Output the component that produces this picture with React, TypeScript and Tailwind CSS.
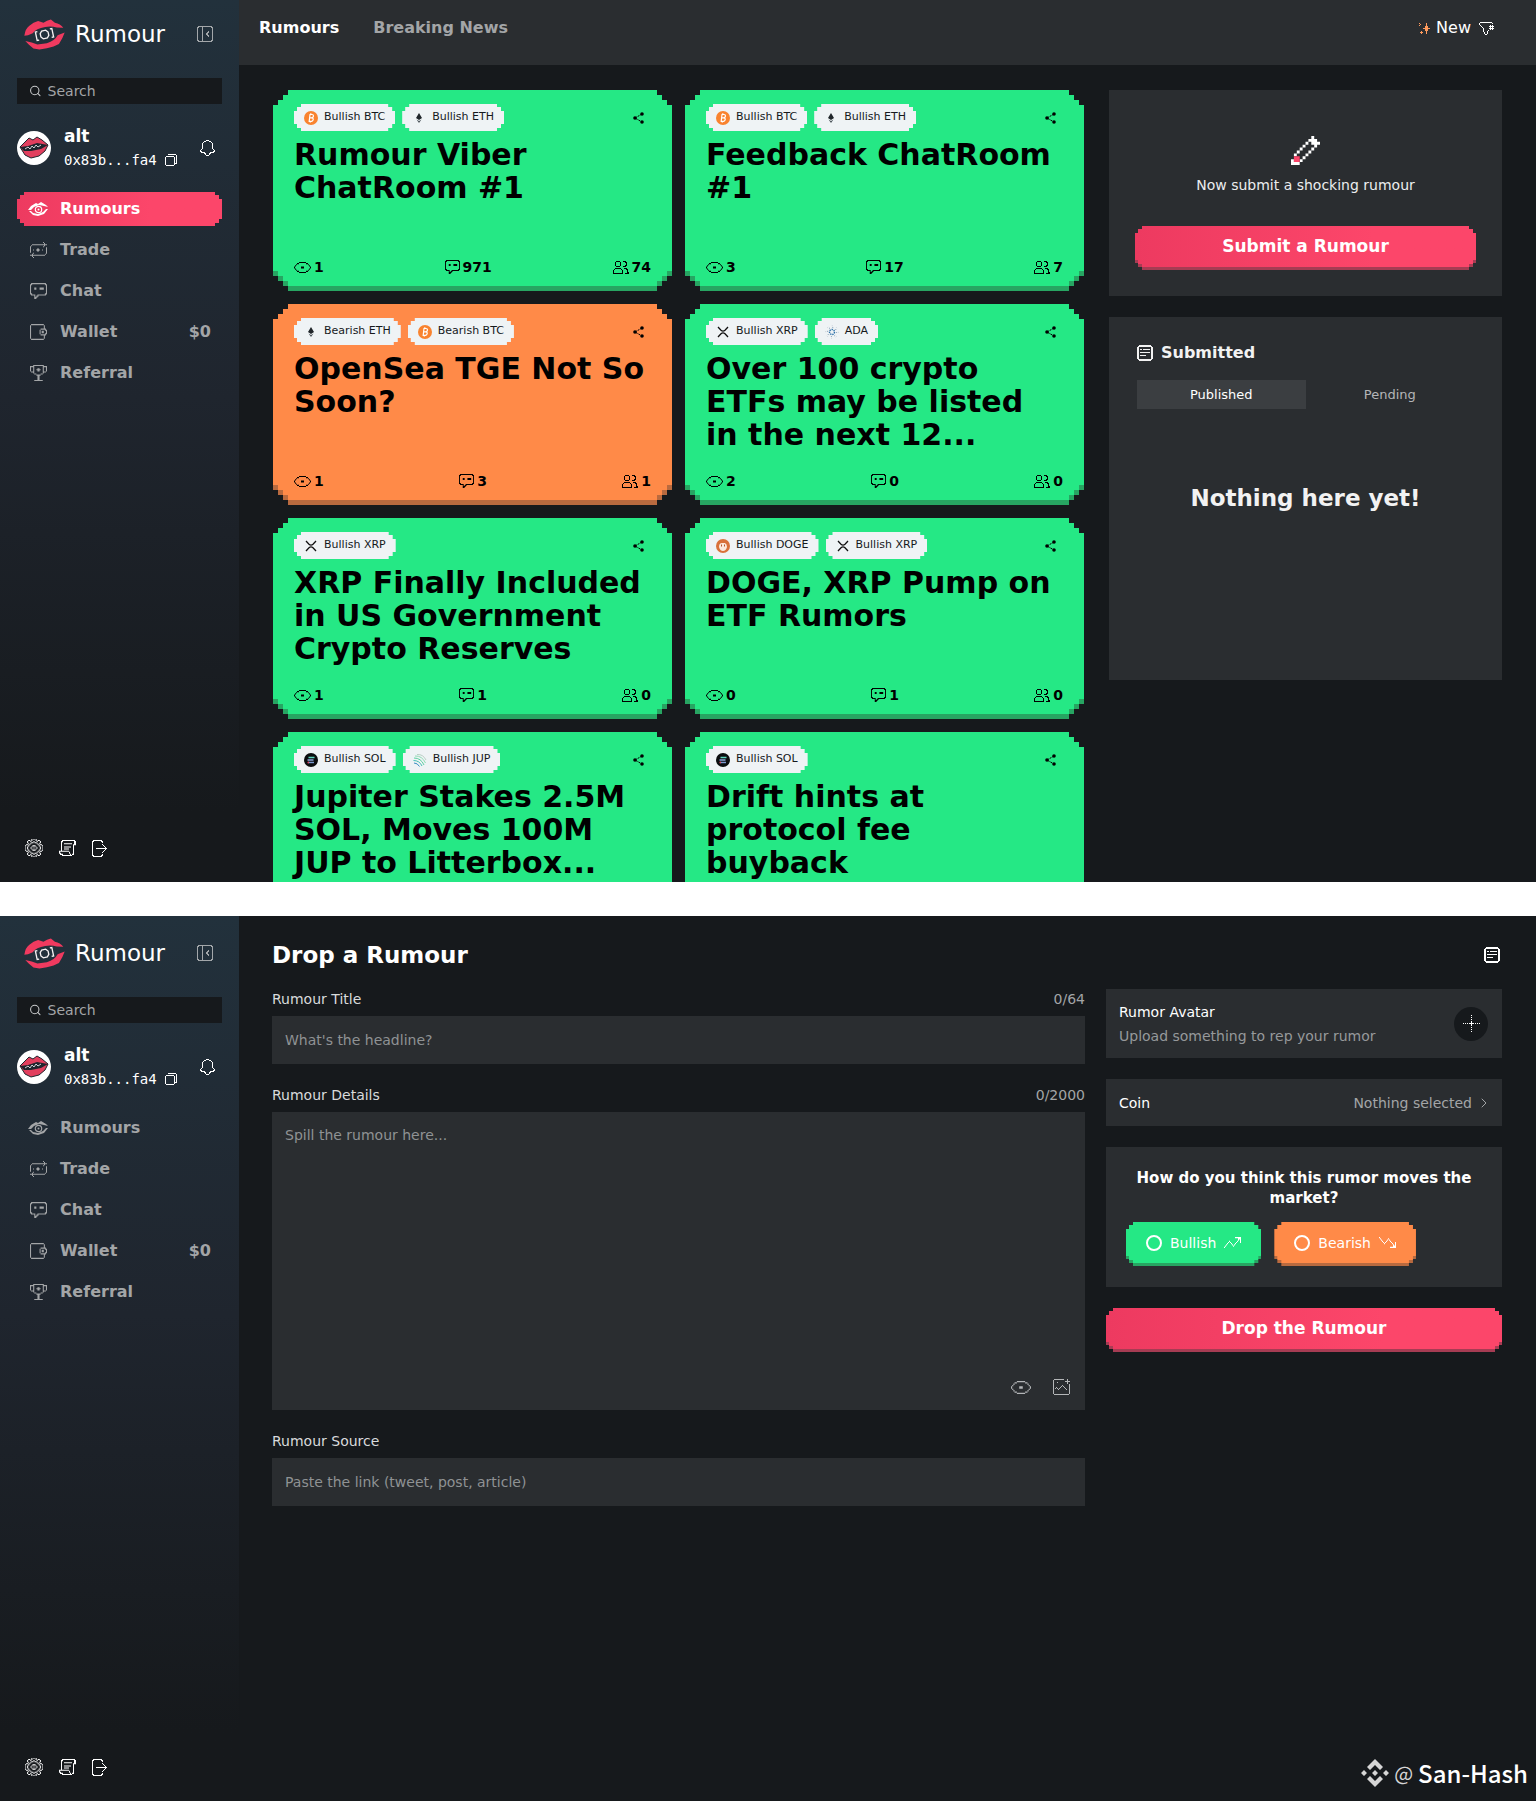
import React, { useState } from 'react';
import { ChevronRight, Search } from 'lucide-react';
import clsx from 'clsx';

type Coin = 'BTC' | 'ETH' | 'XRP' | 'ADA' | 'DOGE' | 'SOL' | 'JUP';

interface Tag {
    coin: Coin;
    label: string;
}

interface Rumour {
    title: string;
    tags: Tag[];
    bearish?: boolean;
    stats?: { views: number; comments: number; members: number };
}

const RUMOURS: Rumour[] = [
    { title: 'Rumour Viber ChatRoom #1', tags: [{ coin: 'BTC', label: 'Bullish BTC' }, { coin: 'ETH', label: 'Bullish ETH' }], stats: { views: 1, comments: 971, members: 74 } },
    { title: 'Feedback ChatRoom #1', tags: [{ coin: 'BTC', label: 'Bullish BTC' }, { coin: 'ETH', label: 'Bullish ETH' }], stats: { views: 3, comments: 17, members: 7 } },
    { title: 'OpenSea TGE Not So Soon?', tags: [{ coin: 'ETH', label: 'Bearish ETH' }, { coin: 'BTC', label: 'Bearish BTC' }], bearish: true, stats: { views: 1, comments: 3, members: 1 } },
    { title: 'Over 100 crypto ETFs may be listed in the next 12...', tags: [{ coin: 'XRP', label: 'Bullish XRP' }, { coin: 'ADA', label: 'ADA' }], stats: { views: 2, comments: 0, members: 0 } },
    { title: 'XRP Finally Included in US Government Crypto Reserves', tags: [{ coin: 'XRP', label: 'Bullish XRP' }], stats: { views: 1, comments: 1, members: 0 } },
    { title: 'DOGE, XRP Pump on ETF Rumors', tags: [{ coin: 'DOGE', label: 'Bullish DOGE' }, { coin: 'XRP', label: 'Bullish XRP' }], stats: { views: 0, comments: 1, members: 0 } },
    { title: 'Jupiter Stakes 2.5M SOL, Moves 100M JUP to Litterbox...', tags: [{ coin: 'SOL', label: 'Bullish SOL' }, { coin: 'JUP', label: 'Bullish JUP' }] },
    { title: 'Drift hints at protocol fee buyback', tags: [{ coin: 'SOL', label: 'Bullish SOL' }] },
];

// Stepped corners, shared by every pixel-art box
const NOTCH_LG =
    '[clip-path:polygon(15px_0,calc(100%_-_15px)_0,calc(100%_-_15px)_5px,calc(100%_-_10px)_5px,calc(100%_-_10px)_10px,calc(100%_-_5px)_10px,calc(100%_-_5px)_15px,100%_15px,100%_calc(100%_-_15px),calc(100%_-_5px)_calc(100%_-_15px),calc(100%_-_5px)_calc(100%_-_10px),calc(100%_-_10px)_calc(100%_-_10px),calc(100%_-_10px)_calc(100%_-_5px),calc(100%_-_15px)_calc(100%_-_5px),calc(100%_-_15px)_100%,15px_100%,15px_calc(100%_-_5px),10px_calc(100%_-_5px),10px_calc(100%_-_10px),5px_calc(100%_-_10px),5px_calc(100%_-_15px),0_calc(100%_-_15px),0_15px,5px_15px,5px_10px,10px_10px,10px_5px,15px_5px)]';
const NOTCH_SM =
    '[clip-path:polygon(7px_0,calc(100%_-_7px)_0,calc(100%_-_7px)_3px,calc(100%_-_3px)_3px,calc(100%_-_3px)_7px,100%_7px,100%_calc(100%_-_7px),calc(100%_-_3px)_calc(100%_-_7px),calc(100%_-_3px)_calc(100%_-_3px),calc(100%_-_7px)_calc(100%_-_3px),calc(100%_-_7px)_100%,7px_100%,7px_calc(100%_-_3px),3px_calc(100%_-_3px),3px_calc(100%_-_7px),0_calc(100%_-_7px),0_7px,3px_7px,3px_3px,7px_3px)]';

// Pixel icons: '#' is drawn in the text colour, 'r' in red
const ICONS = {
    chat: [
        '.##############.',
        '##............##',
        '#..............#',
        '#..............#',
        '#...##...####..#',
        '#...##...####..#',
        '#..............#',
        '#..............#',
        '#..............#',
        '##............##',
        '.####..########.',
        '....#.##........',
        '....###.........',
        '....##..........',
    ],
    eye: [
        '.....#######.....',
        '...##.......##...',
        '..#...........#..',
        '.#.............#.',
        '#......###......#',
        '#......###......#',
        '.#.............#.',
        '..#...........#..',
        '...##.......##...',
        '.....#######.....',
    ],
    users: [
        '...####...###...',
        '..#....#....##..',
        '..#....#.....#..',
        '..#....#.....#..',
        '..#....#....##..',
        '...####...###...',
        '................',
        '..######...###..',
        '.#......#....##.',
        '#........#....#.',
        '#........#....#.',
        '#........#....##',
        '##########..####',
    ],
    trade: [
        '.............#...',
        '..............#..',
        '..###############',
        '.#............#..',
        '#............#...',
        '#...............#',
        '#......##.......#',
        '#..#..####..#...#',
        '#......##.......#',
        '#...............#',
        '...#............#',
        '..#............#.',
        '###############..',
        '..#..............',
        '...#.............',
    ],
    wallet: [
        '.############...',
        '#............#..',
        '#............#..',
        '#............#..',
        '#.........#####.',
        '#........#....##',
        '#........#.##..#',
        '#........#.##..#',
        '#........#....##',
        '#.........#####.',
        '#............#..',
        '#............#..',
        '#............#..',
        '.############...',
    ],
    trophy: [
        '...##########...',
        '####........####',
        '#..#........#..#',
        '#..#...##...#..#',
        '#..#..####..#..#',
        '#..#...##...#..#',
        '.###........###.',
        '...#........#...',
        '....##....##....',
        '......####......',
        '.......##.......',
        '.......##.......',
        '.......##.......',
        '.......##.......',
        '....########....',
    ],
    bell: [
        '......###......',
        '....##...##....',
        '...#.......#...',
        '..#.........#..',
        '..#.........#..',
        '..#.........#..',
        '..#.........#..',
        '..#.........#..',
        '..#.........#..',
        '.#...........#.',
        '#.............#',
        '##...........##',
        '.####.....####.',
        '....##...##....',
        '.....#...#.....',
        '......###......',
    ],
    copy: [
        '...########.',
        '...........#',
        '.########..#',
        '#........#.#',
        '#........#.#',
        '#........#.#',
        '#........#.#',
        '#........#.#',
        '#........#.#',
        '#........###',
        '#........#..',
        '.########...',
    ],
    gear: [
        '......#.#.#......',
        '...##.#...#.##...',
        '..#..#..#..#..#..',
        '..#...##.##...#..',
        '...#.#.....#.#...',
        '.##.#.......#.##.',
        '#..#...###...#..#',
        '..#...#...#...#..',
        '#.#..#..#..#..#.#',
        '..#...#...#...#..',
        '#..#...###...#..#',
        '.##.#.......#.##.',
        '...#.#.....#.#...',
        '..#...##.##...#..',
        '..#..#..#..#..#..',
        '...##.#...#.##...',
        '......#.#.#......',
    ],
    scroll: [
        '...#############.',
        '..##...........##',
        '..#............##',
        '..#..########..##',
        '..#...........###',
        '..#...........#..',
        '..#..#######..#..',
        '..#...........#..',
        '..#..#####....#..',
        '..#...........#..',
        '##########....#..',
        '#.........#...#..',
        '##........#...#..',
        '.###.......#.##..',
        '...##########....',
    ],
    logout: [
        '.#########.....',
        '##.......##....',
        '#.........#....',
        '#..............',
        '#.........#....',
        '#..........#...',
        '#...........#..',
        '#............#.',
        '#...###########',
        '#............#.',
        '#...........#..',
        '#..........#...',
        '#.........#....',
        '#..............',
        '#.........#....',
        '##.......##....',
        '.#########.....',
    ],
    list: [
        '..############..',
        '.##############.',
        '##............##',
        '##............##',
        '##.##.#######.##',
        '##............##',
        '##............##',
        '##.##########.##',
        '##............##',
        '##............##',
        '##.######.....##',
        '##............##',
        '##............##',
        '##............##',
        '.##############.',
        '..############..',
    ],
    collapse: [
        '.##############.',
        '##...#........##',
        '#....#.........#',
        '#....#.........#',
        '#....#.........#',
        '#....#.....#...#',
        '#....#....##...#',
        '#....#...##....#',
        '#....#...##....#',
        '#....#....##...#',
        '#....#.....#...#',
        '#....#.........#',
        '#....#.........#',
        '#....#.........#',
        '##...#........##',
        '.##############.',
    ],
    filter: [
        '.############..',
        '#............#.',
        '#..............',
        '.#.........#.#.',
        '..#.......#####',
        '...#.......#.#.',
        '....#.....#####',
        '....#......#.#.',
        '....#....#.....',
        '....#...#......',
        '.....#..#......',
        '.....#..#......',
        '......##.......',
    ],
    sparkle: [
        '#......#....',
        '.#.....#....',
        '#......#....',
        '......###...',
        '......###...',
        '....#######.',
        '......###...',
        '......###...',
        '..#....#....',
        '.###...#....',
        '..#....#....',
    ],
    pencil: [
        '.......#..',
        '......###.',
        '.....#.###',
        '....#...#.',
        '...#...#..',
        '..#...#...',
        '.#...#....',
        '.rr.#.....',
        '#rr#......',
        '###.......',
    ],
    rise: [
        '...........######',
        '..............###',
        '..............#.#',
        '.....#.......#..#',
        '....#.#.....#...#',
        '...#...#...#.....',
        '..#.....#.#......',
        '.#.......#.......',
        '#................',
    ],
    fall: [
        '#................',
        '.#.......#.......',
        '..#.....#.#......',
        '...#...#...#.....',
        '....#.#.....#...#',
        '.....#.......#..#',
        '..............#.#',
        '..............###',
        '...........######',
    ],
    plus: [
        '........#........',
        '.................',
        '........#........',
        '.................',
        '........#........',
        '.................',
        '........#........',
        '........#........',
        '#.#.#.#####.#.#.#',
        '........#........',
        '........#........',
        '.................',
        '........#........',
        '.................',
        '........#........',
        '.................',
        '........#........',
    ],
    picture: [
        '.##########...#..',
        '#.............#..',
        '#...........#####',
        '#...#.........#..',
        '#.............#..',
        '#...............#',
        '#........#......#',
        '#.......#.#.....#',
        '#..#...#...#....#',
        '#.#.#.#.....#...#',
        '#....#.......#..#',
        '#...............#',
        '#...............#',
        '#...............#',
        '#...............#',
        '.###############.',
    ],
};

type IconName = keyof typeof ICONS;

const toPath = (rows: string[], mark: string) =>
    rows.map((row, y) => [...row].map((c, x) => (c === mark ? `M${x} ${y}h1v1h-1z` : '')).join('')).join('');

const PixelIcon: React.FC<{ name: IconName; className?: string }> = ({ name, className }) => {
    const rows = ICONS[name];
    return (
        <svg viewBox={`0 0 ${rows[0].length} ${rows.length}`} preserveAspectRatio="none" className={clsx('shrink-0', className)} fill="currentColor" aria-hidden="true">
            <path d={toPath(rows, '#')} />
            <path d={toPath(rows, 'r')} fill="#fc466a" />
        </svg>
    );
};

const LipsLogo = () => (
    <svg viewBox="72 56 122 92" className="h-[31px] w-[41px]" aria-hidden="true">
        <path fill="#f03a5f" d="M73 106Q76 84 88 76Q100 66 114 62L130 67Q140 60 152 57L164 67Q180 70 189 82L170 81Q150 76 135 80Q108 84 98 98L84 104Z" />
        <path fill="#f03a5f" d="M193 96Q188 112 176 130L160 138L140 143L118 147L100 144L86 132L76 121Q96 124 112 132L140 128Q164 120 172 104Z" />
        <g fill="none" stroke="#f6f1f2" strokeWidth="4" transform="rotate(-12 133 102)">
            <path d="M114 89h-6v26h6M152 89h6v26h-6" />
            <path d="M121 97l6-7h12l6 7v10l-6 7h-12l-6-7z" />
        </g>
    </svg>
);

const LipsMark = () => (
    <svg viewBox="0 0 20 16" className="h-4 w-5 shrink-0" fill="none" stroke="currentColor" strokeWidth="2" aria-hidden="true">
        <path d="M0 9L3 5L8 2L10 3L13 1L18 4L20 6L16 5L11 4L6 6L3 9Z" fill="currentColor" stroke="none" />
        <path d="M1 10L5 14L10 15L16 13L20 8L18 8L15 11L10 13L5 12L3 10Z" fill="currentColor" stroke="none" />
        <circle cx="10.500" cy="8.500" r="3.200" strokeWidth="1.200" />
        <circle cx="10.500" cy="8.500" r="1" fill="currentColor" stroke="none" />
    </svg>
);

const Avatar = () => (
    <svg viewBox="0 0 34 34" className="size-[34px] shrink-0" role="img" aria-label="alt">
        <circle cx="17" cy="17" r="17" fill="#fff" />
        <path d="M3 16L8 11L12 7L16 9L20 6L25 9L31 14L28 20L22 25L14 27L8 24Z" fill="#e23f5e" stroke="#1f252d" strokeWidth="1" />
        <path d="M3 16L11 15L20 12L31 14L24 18L14 20L7 20Z" fill="#1f252d" />
        <path d="M8 18L11 16L13 18L15 15L17 17L19 14L21 16L24 14" fill="none" stroke="#cfd3d6" strokeWidth="1" />
    </svg>
);

const CoinIcon: React.FC<{ coin: Coin }> = ({ coin }) => (
    <svg viewBox="0 0 14 14" className="size-3.5 shrink-0" fill="none" aria-hidden="true">
        {coin === 'BTC' && (
            <>
                <circle cx="7" cy="7" r="7" fill="#f9832f" />
                <path d="M5.500 3.500h2.500q1.500 0 1.500 1.600T7.500 6.800Q9.500 6.900 9.200 8.700T7.200 10.300H4.600M6 3.500L5.200 10.300M5.700 6.800h2M6.800 2.300v1.200M6.300 10.300v1.300" stroke="#fff" strokeWidth="1.200" />
            </>
        )}
        {coin === 'ETH' && (
            <>
                <path d="M7 2L10 7L7 9L4 7Z" fill="#20262a" />
                <path d="M4.500 8.500L7 12L9.500 8.500L7 10Z" fill="#4a5258" />
            </>
        )}
        {coin === 'XRP' && <path d="M2 2L5 5.200Q7 7 9 5.200L12 2M2 12L5 8.800Q7 7 9 8.800L12 12" stroke="#111" strokeWidth="1.300" />}
        {coin === 'ADA' && (
            <>
                <circle cx="7" cy="7" r="2.500" stroke="#2a6fa8" strokeWidth="1.400" strokeDasharray="1.400 0.800" />
                <circle cx="7" cy="7" r="4.500" stroke="#6f8ea8" strokeWidth="1" strokeDasharray="1 2.500" />
                <circle cx="7" cy="7" r="6.300" stroke="#a9b8c4" strokeWidth="0.800" strokeDasharray="0.800 4" />
            </>
        )}
        {coin === 'DOGE' && (
            <>
                <circle cx="7" cy="7" r="7" fill="#d9713a" />
                <path d="M3 8Q3 4 6 4H9Q11 5 11 8Q10 12 7 12Q4 12 3 8Z" fill="#fbe9dc" />
                <path d="M5.500 5.500v2M8.500 5.500v2" stroke="#b5562a" />
            </>
        )}
        {coin === 'SOL' && (
            <>
                <circle cx="7" cy="7" r="7" fill="#0b0d0f" />
                <path d="M4.500 4.500H10.500" stroke="#5fd8c0" strokeWidth="1.400" />
                <path d="M3.500 7H9.500" stroke="#8fa4dc" strokeWidth="1.400" />
                <path d="M4 9.500H10" stroke="#7d9bd0" strokeWidth="1.400" />
                <path d="M3.500 9.500H5" stroke="#e8455f" strokeWidth="1.400" />
            </>
        )}
        {coin === 'JUP' && (
            <>
                <path d="M4 1.500Q10 1 13 7" stroke="#b9cfc4" />
                <path d="M2 3Q9 2.500 12.500 10" stroke="#8fdcb4" />
                <path d="M1 5Q8 5 11 12" stroke="#5cd0a0" />
                <path d="M0.500 7.500Q6.500 7.500 9 13" stroke="#45bfb4" />
                <path d="M1 10Q4.500 10 6.500 13.500" stroke="#3b8fc4" />
            </>
        )}
    </svg>
);

const ShareIcon = () => (
    <svg viewBox="0 0 11 12" className="h-3 w-[11px]" fill="currentColor" aria-hidden="true">
        <path d="M9 2L2 6L9 10" fill="none" stroke="currentColor" strokeDasharray="2 1" />
        <circle cx="9" cy="2" r="1.800" />
        <circle cx="2" cy="6" r="1.800" />
        <circle cx="9" cy="10" r="1.800" />
    </svg>
);

const NAV: { label: string; icon?: IconName; value?: string }[] = [
    { label: 'Rumours' },
    { label: 'Trade', icon: 'trade' },
    { label: 'Chat', icon: 'chat' },
    { label: 'Wallet', icon: 'wallet', value: '$0' },
    { label: 'Referral', icon: 'trophy' },
];

const Sidebar: React.FC<{ active?: string; className?: string }> = ({ active, className }) => (
    <aside className={clsx('flex w-[239px] shrink-0 flex-col bg-linear-to-b from-[#22313c] via-[#1f252e] via-45% to-[#16191c] to-92% px-[17px] pb-[25px]', className)}>
        <div className="flex h-10 items-center pl-[7px] pr-[9px]">
            <LipsLogo />
            <span className="ml-2.5 text-[23px] leading-10">Rumour</span>
            <button type="button" aria-label="Collapse sidebar" className="ml-auto text-[#a3a7aa]">
                <PixelIcon name="collapse" className="size-4" />
            </button>
        </div>

        <label className="mt-6 flex h-[26px] items-center gap-1.5 bg-[#16191c] px-3 text-[#c9cbcc]">
            <Search size={14} />
            <input type="search" aria-label="Search" placeholder="Search" className="w-full min-w-0 bg-transparent text-sm outline-none placeholder:text-[#a3a5a7]" />
        </label>

        <div className="mt-5 flex h-12 items-center">
            <Avatar />
            <div className="ml-[13px]">
                <div className="text-[17px] leading-6 font-bold">alt</div>
                <div className="flex items-center gap-2 font-['DejaVu_Sans_Mono',monospace] text-sm leading-6">
                    0x83b...fa4
                    <button type="button" aria-label="Copy address">
                        <PixelIcon name="copy" className="size-3" />
                    </button>
                </div>
            </div>
            <button type="button" aria-label="Notifications" className="ml-auto mr-[7px]">
                <PixelIcon name="bell" className="h-4 w-[15px]" />
            </button>
        </div>

        <nav className="mt-5 flex flex-col gap-[7px]">
            {NAV.map((item) => (
                <a
                    key={item.label}
                    href="#"
                    className={clsx(
                        'flex h-[34px] items-center px-[11px] text-base font-bold',
                        NOTCH_SM,
                        item.label === active ? 'bg-linear-to-r from-[#ed3a60] to-[#fc466a] to-65% text-white' : 'text-[#a3a5a7]'
                    )}
                >
                    <span className="flex w-5 justify-center">
                        {item.icon ? <PixelIcon name={item.icon} className="h-4 w-[17px]" /> : <LipsMark />}
                    </span>
                    <span className="ml-3">{item.label}</span>
                    {item.value && <span className="ml-auto">{item.value}</span>}
                </a>
            ))}
        </nav>

        <div className="mt-auto flex items-center gap-4 pl-2">
            <button type="button" aria-label="Settings"><PixelIcon name="gear" className="size-[18px]" /></button>
            <button type="button" aria-label="Docs"><PixelIcon name="scroll" className="h-4 w-[17px]" /></button>
            <button type="button" aria-label="Log out"><PixelIcon name="logout" className="h-[17px] w-[15px]" /></button>
        </div>
    </aside>
);

const RumourCard: React.FC<{ rumour: Rumour }> = ({ rumour }) => (
    <article className={clsx('h-[201px] pb-[5px] text-black', NOTCH_LG, rumour.bearish ? 'bg-[#b96a3f]' : 'bg-[#27a562]')}>
        <div className={clsx('flex h-full flex-col px-[21px] pt-3.5 pb-[9px]', NOTCH_LG, rumour.bearish ? 'bg-[#ff8a48]' : 'bg-[#25e885]')}>
            <div className="flex items-center gap-[7px]">
                {rumour.tags.map((tag) => (
                    <span key={tag.label} className={clsx('flex h-[27px] items-center gap-1.5 bg-[#eff3f5] px-2.5 text-[11px] text-[#16191c]', NOTCH_SM)}>
                        <CoinIcon coin={tag.coin} />
                        {tag.label}
                    </span>
                ))}
                <button type="button" aria-label="Share" className="ml-auto mr-[7px]">
                    <ShareIcon />
                </button>
            </div>
            <h2 className="mt-[7px] pr-1 text-[30px] leading-[33px] font-bold">{rumour.title}</h2>
            {rumour.stats && (
                <div className="mt-auto flex h-5 items-center justify-between text-sm font-bold">
                    <span className="flex items-center gap-[3px]"><PixelIcon name="eye" className="h-[11px] w-[17px]" />{rumour.stats.views}</span>
                    <span className="flex items-center gap-[3px]"><PixelIcon name="chat" className="h-3.5 w-[15px]" />{rumour.stats.comments}</span>
                    <span className="flex items-center gap-[3px]"><PixelIcon name="users" className="h-[13px] w-4" />{rumour.stats.members}</span>
                </div>
            )}
        </div>
    </article>
);

const PinkButton: React.FC<{ type?: 'button' | 'submit'; children: React.ReactNode }> = ({ type = 'button', children }) => (
    <button type={type} className={clsx('block h-11 w-full bg-[#a63c53] pb-[3px]', NOTCH_SM)}>
        <span className={clsx('flex h-full items-center justify-center bg-linear-to-r from-[#ed3a60] to-[#fc466a] to-70% text-[17px] font-bold', NOTCH_SM)}>
            {children}
        </span>
    </button>
);

const FeedScreen = () => {
    const [tab, setTab] = useState('Published');

    return (
        <section className="flex h-[882px] overflow-hidden bg-[#16191c]">
            <Sidebar active="Rumours" className="pt-3.5" />
            <div className="min-w-0 flex-1">
                <header className="flex h-[65px] items-start bg-[#2a2d30] pt-4 pr-[42px] pl-5">
                    <a href="#" className="text-base leading-6 font-bold">Rumours</a>
                    <a href="#" className="ml-[34px] text-base leading-6 font-bold text-[#a3a5a7]">Breaking News</a>
                    <button type="button" className="ml-auto flex items-center gap-[5px] text-base leading-6">
                        <PixelIcon name="sparkle" className="h-[11px] w-3 text-[#ff9a5c]" />
                        New
                        <PixelIcon name="filter" className="ml-[3px] h-[13px] w-[15px]" />
                    </button>
                </header>

                <div className="grid grid-cols-[minmax(0,1fr)_393px] gap-[25px] px-[34px] pt-[25px]">
                    <div className="grid grid-cols-2 gap-[13px]">
                        {RUMOURS.map((rumour) => (
                            <RumourCard key={rumour.title} rumour={rumour} />
                        ))}
                    </div>

                    <div className="flex flex-col gap-[21px]">
                        <div className="flex flex-col items-center bg-[#2a2d30] px-[26px] pt-[46px] pb-[26px]">
                            <PixelIcon name="pencil" className="size-[29px]" />
                            <p className="mt-2.5 text-sm leading-5 text-[#eceeef]">Now submit a shocking rumour</p>
                            <div className="mt-[31px] w-full">
                                <PinkButton>Submit a Rumour</PinkButton>
                            </div>
                        </div>

                        <div className="h-[363px] bg-[#2a2d30] px-7 pt-6">
                            <h2 className="flex items-center gap-2 text-base leading-6 font-bold text-[#f2f2f2]">
                                <PixelIcon name="list" className="size-4" />
                                Submitted
                            </h2>
                            <div className="mt-[15px] grid grid-cols-2">
                                {['Published', 'Pending'].map((name) => (
                                    <button
                                        key={name}
                                        type="button"
                                        onClick={() => setTab(name)}
                                        className={clsx('h-[29px] text-[13px]', tab === name ? 'bg-[#3b3e41]' : 'text-[#b4b6b8]')}
                                    >
                                        {name}
                                    </button>
                                ))}
                            </div>
                            <p className="mt-[73px] text-center text-[23px] leading-8 font-bold text-[#f2f2f2]">Nothing here yet!</p>
                        </div>
                    </div>
                </div>
            </div>
        </section>
    );
};

const MoodOption: React.FC<{ label: string; icon: IconName; face: string; shade: string }> = ({ label, icon, face, shade }) => (
    <label className={clsx('h-11 cursor-pointer pb-[3px]', NOTCH_SM, shade)}>
        <span className={clsx('flex h-full items-center gap-2 px-5 text-sm', NOTCH_SM, face)}>
            <input type="radio" name="mood" value={label} className="size-4 appearance-none rounded-full border-2 border-white checked:bg-white" />
            {label}
            <PixelIcon name={icon} className="h-[11px] w-[17px]" />
        </span>
    </label>
);

const ComposeScreen = () => {
    const [title, setTitle] = useState('');
    const [details, setDetails] = useState('');

    return (
        <section className="relative flex min-h-[885px] bg-[#16191c]">
            <Sidebar className="pt-[17px]" />
            <form className="min-w-0 flex-1 pt-[27px] pr-[34px] pl-[33px]" onSubmit={(e) => e.preventDefault()}>
                <div className="flex h-6 items-center justify-between pr-0.5">
                    <h1 className="text-[23px] leading-6 font-bold">Drop a Rumour</h1>
                    <button type="button" aria-label="Drafts">
                        <PixelIcon name="list" className="size-4" />
                    </button>
                </div>

                <div className="mt-[22px] grid grid-cols-[minmax(0,1fr)_396px] items-start gap-[21px] text-sm">
                    <div className="flex flex-col gap-[21px]">
                        <div>
                            <div className="flex justify-between leading-5 text-[#d9dbdc]">
                                <label htmlFor="title">Rumour Title</label>
                                <span className="text-[#a3a5a7]">{title.length}/64</span>
                            </div>
                            <input id="title" maxLength={64} value={title} onChange={(e) => setTitle(e.target.value)} placeholder="What's the headline?" className="mt-[7px] block h-12 w-full bg-[#2a2d30] px-[13px] outline-none placeholder:text-[#8f9294]" />
                        </div>

                        <div>
                            <div className="flex justify-between leading-5 text-[#d9dbdc]">
                                <label htmlFor="details">Rumour Details</label>
                                <span className="text-[#a3a5a7]">{details.length}/2000</span>
                            </div>
                            <div className="relative mt-[7px]">
                                <textarea id="details" maxLength={2000} value={details} onChange={(e) => setDetails(e.target.value)} placeholder="Spill the rumour here..." className="block h-[298px] w-full resize-none bg-[#2a2d30] p-[13px] leading-5 outline-none placeholder:text-[#8f9294]" />
                                <div className="absolute right-[15px] bottom-[15px] flex items-center gap-[22px] text-[#b4b6b8]">
                                    <button type="button" aria-label="Preview"><PixelIcon name="eye" className="h-[13px] w-5" /></button>
                                    <button type="button" aria-label="Add image"><PixelIcon name="picture" className="h-4 w-[17px]" /></button>
                                </div>
                            </div>
                        </div>

                        <div>
                            <label htmlFor="source" className="block leading-5 text-[#d9dbdc]">Rumour Source</label>
                            <input id="source" type="url" placeholder="Paste the link (tweet, post, article)" className="mt-[7px] block h-12 w-full bg-[#2a2d30] px-[13px] outline-none placeholder:text-[#8f9294]" />
                        </div>
                    </div>

                    <div className="flex flex-col gap-[21px]">
                        <div className="flex h-[69px] items-center justify-between bg-[#2a2d30] pr-3.5 pl-[13px]">
                            <div>
                                <div className="leading-6">Rumor Avatar</div>
                                <div className="leading-6 text-[#96999b]">Upload something to rep your rumor</div>
                            </div>
                            <button type="button" aria-label="Upload avatar" className="flex size-[34px] items-center justify-center rounded-full bg-[#16191c]">
                                <PixelIcon name="plus" className="size-[17px]" />
                            </button>
                        </div>

                        <button type="button" className="flex h-[47px] items-center justify-between bg-[#2a2d30] pr-2.5 pl-[13px]">
                            Coin
                            <span className="flex items-center gap-1 text-[#a3a5a7]">
                                Nothing selected
                                <ChevronRight size={16} strokeWidth={1.5} />
                            </span>
                        </button>

                        <fieldset className="bg-[#2a2d30] px-5 py-[21px]">
                            <legend className="float-left w-full text-center text-[15px] leading-5 font-bold">How do you think this rumor moves the market?</legend>
                            <div className="clear-both flex gap-[13px] pt-3.5">
                                <MoodOption label="Bullish" icon="rise" face="bg-[#25e885]" shade="bg-[#27a562]" />
                                <MoodOption label="Bearish" icon="fall" face="bg-[#ff8a48]" shade="bg-[#b96a3f]" />
                            </div>
                        </fieldset>

                        <PinkButton type="submit">Drop the Rumour</PinkButton>
                    </div>
                </div>
            </form>

            {/* Author mark */}
            <div className="absolute right-2 bottom-2.5 flex items-center gap-[5px] font-['Noto_Sans_CJK_SC',sans-serif] text-2xl leading-9">
                <svg viewBox="0 0 28 28" className="size-7" fill="#d6d6d6" aria-hidden="true">
                    <path d="M14 0L22 8L19 11L14 6L9 11L6 8Z" />
                    <path d="M14 28L22 20L19 17L14 22L9 17L6 20Z" />
                    <path d="M3 11L6 14L3 17L0 14ZM25 11L28 14L25 17L22 14ZM14 11L17 14L14 17L11 14Z" />
                </svg>
                <span className="text-xl leading-9 text-[#d6d6d6]">@</span>
                <span className="font-medium">San-Hash</span>
            </div>
        </section>
    );
};

export default function App() {
    return (
        <main className="flex flex-col gap-[34px] bg-white font-['DejaVu_Sans',sans-serif] text-white">
            <FeedScreen />
            <ComposeScreen />
        </main>
    );
}
